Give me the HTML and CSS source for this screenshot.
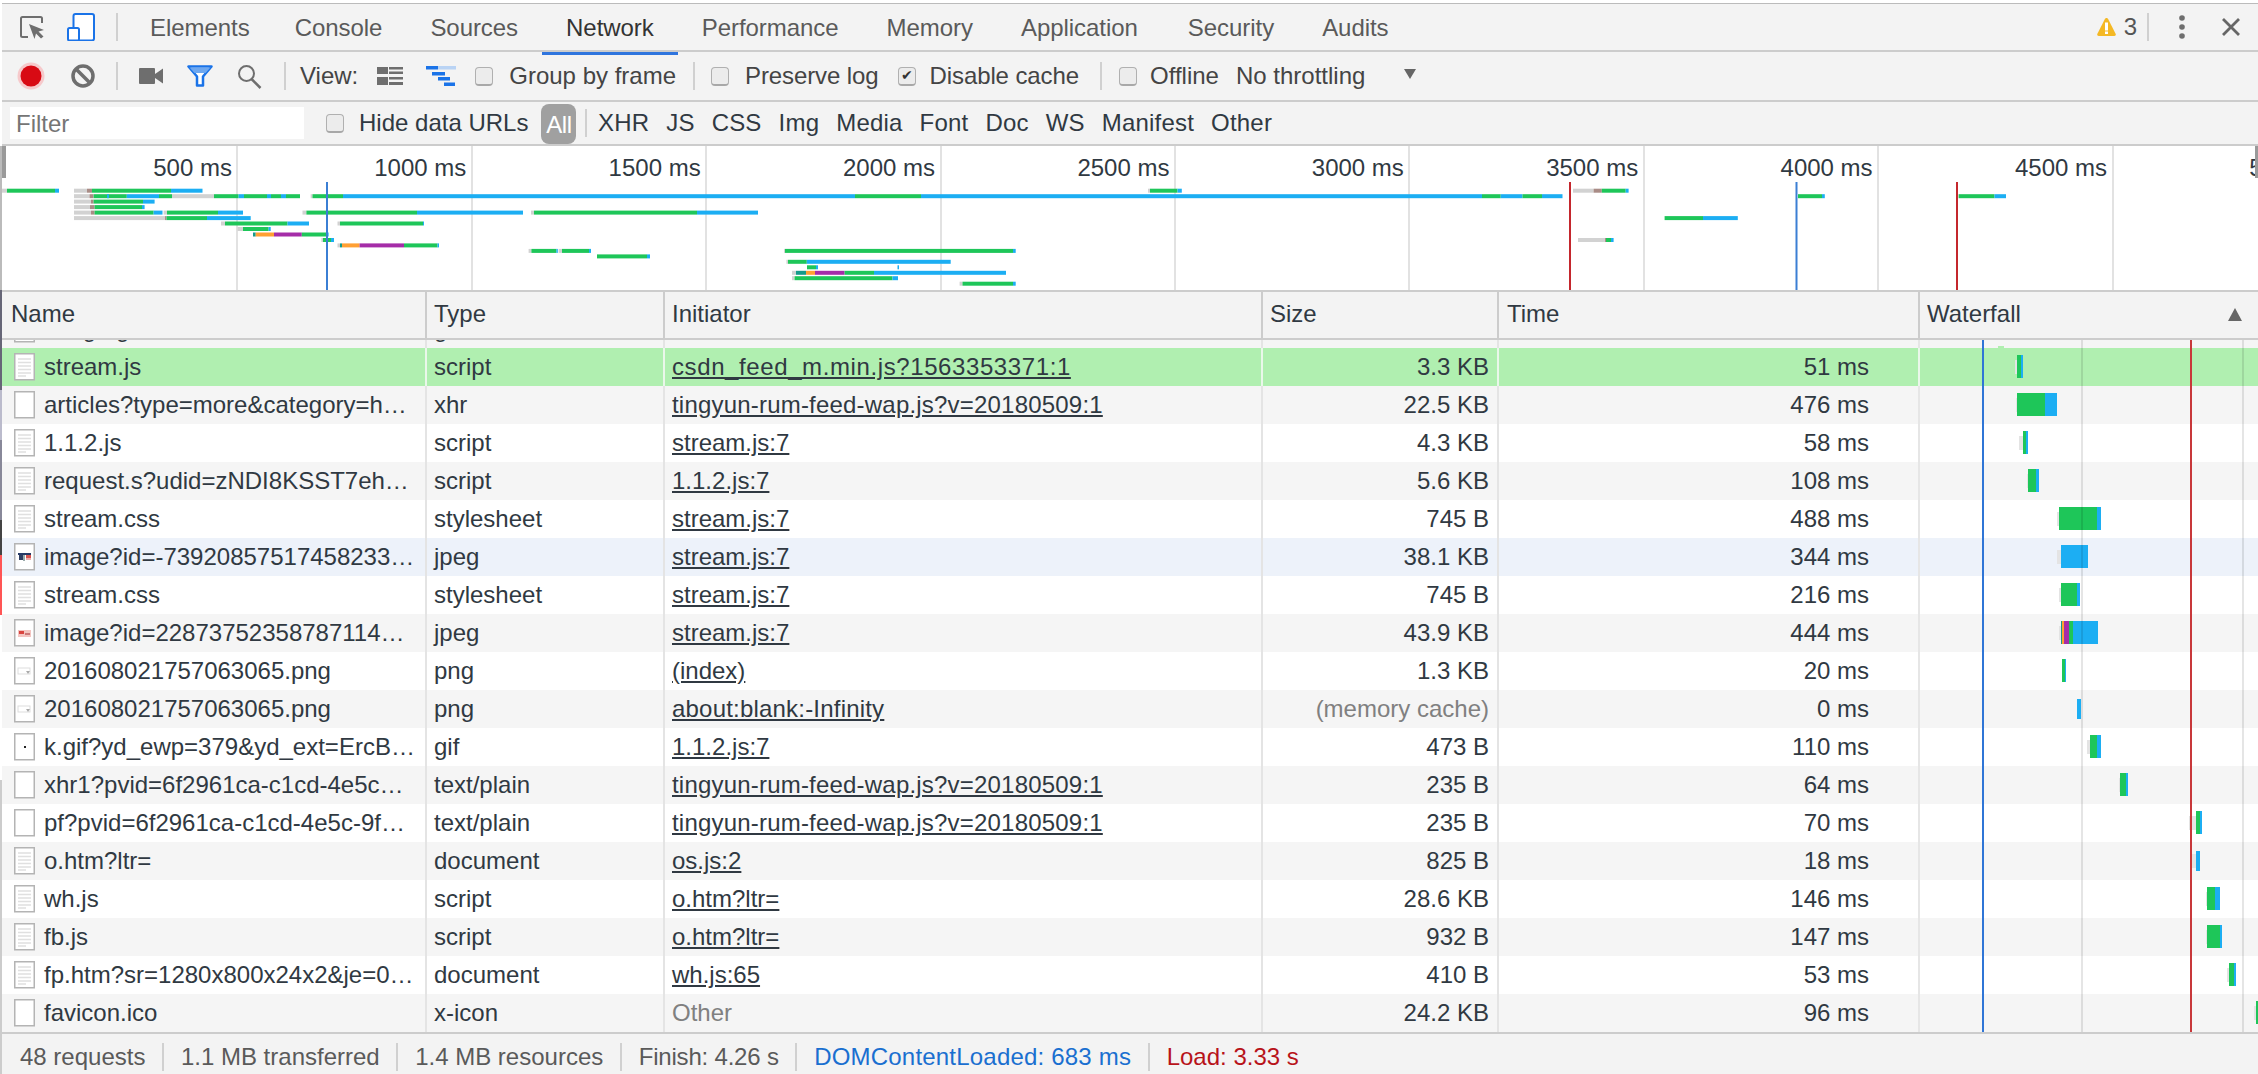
FILE: index.html
```html
<!DOCTYPE html>
<html lang="en">
<head>
<meta charset="utf-8">
<title>DevTools Network</title>
<link rel="stylesheet" href="styles.css">
</head>
<body>
<svg class="sprite" aria-hidden="true">
  <symbol id="f-blank" viewBox="0 0 21 28"><rect class="f-page" x=".75" y=".75" width="19.5" height="26"/></symbol>
  <symbol id="f-doc" viewBox="0 0 21 28"><rect class="f-page" x=".75" y=".75" width="19.5" height="26"/><path class="f-lines" d="M4 6h13M4 9.500h13M4 13h13M4 16.500h13M4 20h13M4 23h8"/></symbol>
  <symbol id="f-img1" viewBox="0 0 21 28"><rect class="f-page" x=".75" y=".75" width="19.500" height="26"/><rect x="4" y="10" width="13" height="2" fill="#273a66"/><rect x="5" y="12" width="4" height="5" fill="#2f3f63"/><rect x="9" y="12" width="2" height="6" fill="#9aa"/><rect x="12" y="12" width="5" height="3" fill="#d9544f"/><rect x="12" y="15" width="5" height="2" fill="#eaa"/></symbol>
  <symbol id="f-img2" viewBox="0 0 21 28"><rect class="f-page" x=".75" y=".75" width="19.500" height="26"/><rect x="4" y="11" width="13" height="7" fill="#f3c4c0"/><rect x="5" y="12" width="5" height="3" fill="#d9443f"/><rect x="11" y="14" width="5" height="2" fill="#c77"/></symbol>
  <symbol id="f-png" viewBox="0 0 21 28"><rect class="f-page" x=".75" y=".75" width="19.500" height="26"/><rect x="4" y="11" width="12" height="6" fill="none" stroke="#ddd"/><path d="M12 14h4l-2 3z" fill="#aaa"/></symbol>
  <symbol id="f-gif" viewBox="0 0 21 28"><rect class="f-page" x=".75" y=".75" width="19.500" height="26"/><rect x="10" y="13" width="2" height="2" fill="#222"/></symbol>
</svg>

<div class="app">
  <div class="peek"></div>
  <div class="devtools">

    <header class="tabbar">
      <svg class="ic ic-inspect" width="25" height="23" viewBox="0 0 25 23"><path class="st" d="M8 21H2.500a1.500 1.500 0 0 1-1.500-1.500V2.500A1.500 1.500 0 0 1 2.500 1h18A1.500 1.500 0 0 1 22 2.500V7"/><path class="fl" d="M9 8l15 6-5.500 1.500 5 5-2.500 2-5-5L14.500 23z"/></svg>
      <svg class="ic ic-device" width="28" height="28" viewBox="0 0 28 28"><rect x="6.500" y="1" width="20.500" height="26.500" rx="2" class="st-b"/><rect x="1" y="15" width="11" height="12.500" rx="1.500" class="st-b wh"/></svg>
      <span class="vsep sep-tabs"></span>
      <nav class="tabs">
        <a class="tab tab-first">Elements</a>
        <a class="tab">Console</a>
        <a class="tab">Sources</a>
        <a class="tab active">Network</a>
        <a class="tab">Performance</a>
        <a class="tab">Memory</a>
        <a class="tab tab-app">Application</a>
        <a class="tab">Security</a>
        <a class="tab">Audits</a>
      </nav>
      <div class="tab-right">
        <svg class="ic" width="19" height="18" viewBox="0 0 19 18"><path d="M9.500 0c.8 0 1.200.4 1.600 1.100l7.500 14.600c.6 1.200 0 2.300-1.300 2.300H1.700C.4 18-.2 16.900.4 15.700L7.900 1.100C8.300.4 8.700 0 9.500 0z" fill="#f4b824"/><rect x="8" y="4.500" width="3" height="8" fill="#fff"/><rect x="8" y="13.500" width="3" height="2.500" fill="#fff"/></svg>
        <span class="warn-count">3</span>
        <span class="vsep sep-warn"></span>
        <svg class="ic ic-dots" width="6" height="24" viewBox="0 0 6 24"><circle cx="3" cy="3" r="2.800"/><circle cx="3" cy="12" r="2.800"/><circle cx="3" cy="21" r="2.800"/></svg>
        <svg class="ic ic-close" width="18" height="18" viewBox="0 0 18 18"><path d="M1 1l16 16M17 1L1 17" stroke="#666" stroke-width="2.800" fill="none"/></svg>
      </div>
    </header>

    <div class="toolbar">
      <svg class="ic ic-record" width="30" height="30" viewBox="0 0 30 30"><circle cx="15" cy="15" r="13.500" fill="#f6c9cb"/><circle cx="15" cy="15" r="10.500" fill="#d80a14"/></svg>
      <svg class="ic ic-clear" width="24" height="24" viewBox="0 0 24 24"><circle cx="12" cy="12" r="10" fill="none" stroke="#6e6e6e" stroke-width="3.500"/><path d="M5 5l14 14" stroke="#6e6e6e" stroke-width="3.500"/></svg>
      <span class="vsep sep-a"></span>
      <svg class="ic ic-cam" width="24" height="16" viewBox="0 0 24 16"><rect width="16" height="16" rx="1" fill="#6e6e6e"/><path d="M16 6l8-5.500v15L16 10z" fill="#6e6e6e"/></svg>
      <svg class="ic ic-filter" width="26" height="22" viewBox="0 0 26 22"><path d="M1.500 1.500h23L16 11.500V20.500h-6V11.500z" fill="#fff" stroke="#1a73e8" stroke-width="2.500" stroke-linejoin="round"/><path d="M2.500 2.500h21L18.500 8h-11z" fill="#6ea8f0"/></svg>
      <svg class="ic ic-search" width="25" height="25" viewBox="0 0 25 25"><circle cx="9.500" cy="9.500" r="7.500" fill="none" stroke="#6e6e6e" stroke-width="2"/><path d="M14.500 15l9 9" stroke="#6e6e6e" stroke-width="2.500"/></svg>
      <span class="vsep sep-b"></span>
      <span class="lbl lbl-view">View:</span>
      <svg class="ic ic-list" width="26" height="18" viewBox="0 0 26 18"><path class="fl" d="M0 0h11v7H0zM0 10h11v8H0zM12 0h14v2.500H12zM12 4.500h14V7H12zM12 10h14v2.500H12zM12 15h14v3H12z"/></svg>
      <svg class="ic ic-wf" width="30" height="20" viewBox="0 0 30 20"><rect width="12" height="3.500" fill="#1a73e8"/><rect x="12" width="18" height="3.500" fill="#b9d3f4"/><rect x="6" y="6" width="13" height="3.500" fill="#1a73e8"/><rect x="12" y="11" width="12" height="3.500" fill="#1a73e8"/><rect x="18" y="16.500" width="11" height="3.500" fill="#1a73e8"/></svg>
      <span class="cb cb-group"></span>
      <span class="lbl lbl-group">Group by frame</span>
      <span class="vsep sep-c"></span>
      <span class="cb cb-preserve"></span>
      <span class="lbl lbl-check">Preserve log</span>
      <span class="cb checked cb-disable">&#10004;</span>
      <span class="lbl lbl-check lbl-disable">Disable cache</span>
      <span class="vsep sep-d"></span>
      <span class="cb cb-offline"></span>
      <span class="lbl lbl-offline">Offline</span>
      <span class="lbl lbl-throttle">No throttling</span>
      <span class="tri-down"></span>
    </div>

    <div class="filterbar">
      <div class="filter-input">Filter</div>
      <span class="cb cb-hide"></span>
      <span class="lbl lbl-hide">Hide data URLs</span>
      <span class="pill">All</span>
      <span class="vsep sep-f"></span>
      <span class="ftype first">XHR</span>
      <span class="ftype">JS</span>
      <span class="ftype">CSS</span>
      <span class="ftype">Img</span>
      <span class="ftype">Media</span>
      <span class="ftype">Font</span>
      <span class="ftype">Doc</span>
      <span class="ftype">WS</span>
      <span class="ftype">Manifest</span>
      <span class="ftype">Other</span>
    </div>

    <section class="overview">
      <div class="ticks">
        <div class="tick">500 ms</div><div class="tick">1000 ms</div><div class="tick">1500 ms</div><div class="tick">2000 ms</div><div class="tick">2500 ms</div><div class="tick">3000 ms</div><div class="tick">3500 ms</div><div class="tick">4000 ms</div><div class="tick">4500 ms</div><div class="tick">5000 ms</div>
      </div>
      <svg class="ov-chart" width="2256" height="144" viewBox="2 146 2256 144">
        <rect class="handle" x="2" y="146" width="4" height="32"/><rect class="handle" x="2255" y="146" width="3" height="32"/>
        <g transform="translate(0 188.700)"><rect class="s" x="2" width="5" height="4"/><rect class="g" x="7" width="48" height="4"/><rect class="b" x="55" width="4" height="4"/><rect class="s" x="74" width="13" height="4"/><rect class="r" x="87" width="5" height="4"/><rect class="g" x="92" width="79" height="4"/><rect class="b" x="171" width="31.500" height="4"/><rect class="s" x="1148" width="2" height="4"/><rect class="g" x="1150" width="27.500" height="4"/><rect class="b" x="1177.500" width="4.300" height="4"/><rect class="s" x="1573" width="20.600" height="4"/><rect class="r" x="1593.600" width="8.200" height="4"/><rect class="g" x="1601.800" width="23.900" height="4"/><rect class="b" x="1625.700" width="2.900" height="4"/></g>
        <g transform="translate(0 194.200)"><rect class="s" x="74" width="15.500" height="4"/><rect class="r" x="89.500" width="4" height="4"/><rect class="g" x="93.600" width="33.200" height="4"/><rect class="b" x="107" width="2" height="4"/><rect class="b" x="126.800" width="32.200" height="4"/><rect class="g" x="159" width="13" height="4"/><rect class="s" x="172" width="42" height="4"/><rect class="g" x="214" width="24.600" height="4"/><rect class="b" x="238.600" width="5.400" height="4"/><rect class="g" x="244" width="23" height="4"/><rect class="b" x="267" width="4" height="4"/><rect class="g" x="271" width="10" height="4"/><rect class="b" x="281" width="5" height="4"/><rect class="g" x="286" width="14" height="4"/><rect class="s" x="310.700" width="1.800" height="4"/><rect class="g" x="312.500" width="30.500" height="4"/><rect class="b" x="343" width="512" height="4"/><rect class="g" x="855" width="66" height="4"/><rect class="b" x="921" width="561" height="4"/><rect class="g" x="1482" width="18.700" height="4"/><rect class="b" x="1500.700" width="21.800" height="4"/><rect class="g" x="1522.500" width="19.500" height="4"/><rect class="b" x="1542" width="20.500" height="4"/><rect class="g" x="1798" width="24" height="4"/><rect class="b" x="1822" width="2.800" height="4"/><rect class="g" x="1958.600" width="35.900" height="4"/><rect class="b" x="1994.500" width="11.500" height="4"/></g>
        <g transform="translate(0 199.600)"><rect class="s" x="74" width="17" height="4"/><rect class="r" x="91" width="2.600" height="4"/><rect class="g" x="93.600" width="49.400" height="4"/><rect class="b" x="143" width="11.600" height="4"/></g>
        <g transform="translate(0 205.100)"><rect class="s" x="74" width="16" height="4"/><rect class="r" x="90" width="4.600" height="4"/><rect class="g" x="94.600" width="47.400" height="4"/><rect class="b" x="142" width="2.600" height="4"/></g>
        <g transform="translate(0 210.600)"><rect class="s" x="74" width="17" height="4"/><rect class="r" x="91" width="3.600" height="4"/><rect class="g" x="94.600" width="59" height="4"/><rect class="b" x="153.600" width="8.900" height="4"/><rect class="s" x="163.600" width="3.400" height="4"/><rect class="g" x="167" width="51" height="4"/><rect class="b" x="218" width="25" height="4"/><rect class="s" x="302.500" width="3.900" height="4"/><rect class="g" x="306.400" width="110.600" height="4"/><rect class="b" x="417" width="106" height="4"/><rect class="s" x="531" width="3" height="4"/><rect class="g" x="534" width="163" height="4"/><rect class="b" x="697" width="61" height="4"/></g>
        <g transform="translate(0 216.100)"><rect class="s" x="74" width="91" height="4"/><rect class="r" x="165" width="1.500" height="4"/><rect class="g" x="166.500" width="40.500" height="4"/><rect class="b" x="207" width="43.700" height="4"/><rect class="g" x="1664.600" width="38.400" height="4"/><rect class="b" x="1703" width="34.800" height="4"/></g>
        <g transform="translate(0 221.500)"><rect class="s" x="221" width="4" height="4"/><rect class="g" x="225" width="62.500" height="4"/><rect class="b" x="287.500" width="21.500" height="4"/><rect class="s" x="337.500" width="2.500" height="4"/><rect class="g" x="340" width="83" height="4"/><rect class="b" x="423" width="1" height="4"/></g>
        <g transform="translate(0 227)"><rect class="s" x="237.500" width="5.500" height="4"/><rect class="g" x="243" width="25.600" height="4"/><rect class="b" x="268.600" width="2.100" height="4"/></g>
        <g transform="translate(0 232.500)"><rect class="t" x="253" width="2.700" height="4"/><rect class="o" x="255.700" width="18.300" height="4"/><rect class="p" x="274" width="27.800" height="4"/><rect class="g" x="301.800" width="25" height="4"/><rect class="b" x="326.800" width="1.800" height="4"/></g>
        <g transform="translate(0 238)"><rect class="s" x="321.400" width="1.600" height="4"/><rect class="g" x="323" width="8" height="4"/><rect class="b" x="331" width="3" height="4"/><rect class="s" x="1578" width="27" height="4"/><rect class="r" x="1605" width="1" height="4"/><rect class="g" x="1606" width="5" height="4"/><rect class="b" x="1611" width="2.600" height="4"/></g>
        <g transform="translate(0 243.400)"><rect class="s" x="337.500" width="2.500" height="4"/><rect class="t" x="340" width="2" height="4"/><rect class="o" x="342" width="17.600" height="4"/><rect class="p" x="359.600" width="44.400" height="4"/><rect class="g" x="404" width="33.500" height="4"/><rect class="b" x="437.500" width="1.500" height="4"/></g>
        <g transform="translate(0 248.900)"><rect class="s" x="528.600" width="2.800" height="4"/><rect class="g" x="531.400" width="25" height="4"/><rect class="b" x="556.400" width="1.400" height="4"/><rect class="s" x="558.600" width="3.400" height="4"/><rect class="g" x="562" width="27" height="4"/><rect class="b" x="589" width="2" height="4"/><rect class="s" x="784" width="1" height="4"/><rect class="g" x="785" width="228" height="4"/><rect class="b" x="1013" width="2.700" height="4"/></g>
        <g transform="translate(0 254.400)"><rect class="g" x="597" width="50" height="4"/><rect class="b" x="647" width="3" height="4"/></g>
        <g transform="translate(0 259.800)"><rect class="s" x="786.400" width="1.600" height="4"/><rect class="g" x="788" width="18.800" height="4"/><rect class="b" x="806.800" width="143.900" height="4"/></g>
        <g transform="translate(0 265.300)"><rect class="g" x="807" width="9" height="4"/><rect class="b" x="816" width="2" height="4"/><rect class="b" x="897.500" width="1.500" height="4"/></g>
        <g transform="translate(0 270.800)"><rect class="s" x="792" width="4" height="4"/><rect class="t" x="796" width="10" height="4"/><rect class="o" x="806" width="9" height="4"/><rect class="p" x="815" width="29.600" height="4"/><rect class="g" x="844.600" width="29.400" height="4"/><rect class="b" x="874" width="132" height="4"/></g>
        <g transform="translate(0 276.200)"><rect class="s" x="792" width="2.600" height="4"/><rect class="g" x="794.600" width="97.900" height="4"/><rect class="b" x="892.500" width="5.500" height="4"/></g>
        <g transform="translate(0 281.700)"><rect class="s" x="959.600" width="2.900" height="4"/><rect class="g" x="962.500" width="50.500" height="4"/><rect class="b" x="1013" width="2.700" height="4"/></g>
        <rect class="line-blue" x="326" y="182" width="2" height="108"/><rect class="line-blue" x="1795.500" y="182" width="2" height="108"/>
        <rect class="line-red" x="1569" y="182" width="2" height="108"/><rect class="line-red" x="1956" y="182" width="2" height="108"/>
      </svg>
    </section>

    <section class="netlog">
      <div class="row head">
        <div class="cell c-name">Name</div>
        <div class="cell c-type">Type</div>
        <div class="cell c-init">Initiator</div>
        <div class="cell c-size">Size</div>
        <div class="cell c-time">Time</div>
        <div class="cell c-wf">Waterfall<span class="tri-up"></span></div>
      </div>
      <div class="body">
        <div class="rows">
          <div class="row scrolled alt"><div class="cell c-name"><svg class="file"><use href="#f-doc"/></svg>image.gif</div><div class="cell c-type">gif</div><div class="cell c-init"></div><div class="cell c-size"></div><div class="cell c-time"></div><div class="cell c-wf"><span class="mark"></span></div></div>

          <div class="row selected"><div class="cell c-name"><svg class="file"><use href="#f-doc"/></svg>stream.js</div><div class="cell c-type">script</div><div class="cell c-init"><a class="lnk-csdn">csdn_feed_m.min.js?1563353371:1</a></div><div class="cell c-size">3.3 KB</div><div class="cell c-time">51 ms</div><div class="cell c-wf"><i class="seg s" style="margin-left:95px;width:2.300px"></i><i class="seg g" style="width:3.400px"></i><i class="seg b" style="width:2.300px"></i></div></div>

          <div class="row alt"><div class="cell c-name"><svg class="file"><use href="#f-blank"/></svg>articles?type=more&amp;category=h…</div><div class="cell c-type">xhr</div><div class="cell c-init"><a class="lnk-mid">tingyun-rum-feed-wap.js?v=20180509:1</a></div><div class="cell c-size">22.5 KB</div><div class="cell c-time">476 ms</div><div class="cell c-wf"><i class="seg s" style="margin-left:95.700px;width:1.600px"></i><i class="seg g" style="width:27.400px"></i><i class="seg b" style="width:12.600px"></i></div></div>

          <div class="row"><div class="cell c-name"><svg class="file"><use href="#f-doc"/></svg>1.1.2.js</div><div class="cell c-type">script</div><div class="cell c-init"><a>stream.js:7</a></div><div class="cell c-size">4.3 KB</div><div class="cell c-time">58 ms</div><div class="cell c-wf"><i class="seg s" style="margin-left:99.300px;width:3.400px"></i><i class="seg g" style="width:3.300px"></i><i class="seg b" style="width:2.400px"></i></div></div>

          <div class="row alt"><div class="cell c-name"><svg class="file"><use href="#f-doc"/></svg>request.s?udid=zNDI8KSST7eh…</div><div class="cell c-type">script</div><div class="cell c-init"><a>1.1.2.js:7</a></div><div class="cell c-size">5.6 KB</div><div class="cell c-time">108 ms</div><div class="cell c-wf"><i class="seg s" style="margin-left:106.700px;width:1.600px"></i><i class="seg g" style="width:7.400px"></i><i class="seg b" style="width:3.600px"></i></div></div>

          <div class="row"><div class="cell c-name"><svg class="file"><use href="#f-doc"/></svg>stream.css</div><div class="cell c-type">stylesheet</div><div class="cell c-init"><a>stream.js:7</a></div><div class="cell c-size">745 B</div><div class="cell c-time">488 ms</div><div class="cell c-wf"><i class="seg s" style="margin-left:137.300px;width:1.400px"></i><i class="seg g" style="width:38.600px"></i><i class="seg b" style="width:3.400px"></i></div></div>

          <div class="row hover"><div class="cell c-name"><svg class="file"><use href="#f-img1"/></svg>image?id=-73920857517458233…</div><div class="cell c-type">jpeg</div><div class="cell c-init"><a>stream.js:7</a></div><div class="cell c-size">38.1 KB</div><div class="cell c-time">344 ms</div><div class="cell c-wf"><i class="seg s" style="margin-left:137.300px;width:3.400px"></i><i class="seg g" style="width:.400px"></i><i class="seg b" style="width:27px"></i></div></div>

          <div class="row"><div class="cell c-name"><svg class="file"><use href="#f-doc"/></svg>stream.css</div><div class="cell c-type">stylesheet</div><div class="cell c-init"><a>stream.js:7</a></div><div class="cell c-size">745 B</div><div class="cell c-time">216 ms</div><div class="cell c-wf"><i class="seg s" style="margin-left:139.300px;width:1.600px"></i><i class="seg g" style="width:16px"></i><i class="seg b" style="width:3.600px"></i></div></div>

          <div class="row alt"><div class="cell c-name"><svg class="file"><use href="#f-img2"/></svg>image?id=22873752358787114…</div><div class="cell c-type">jpeg</div><div class="cell c-init"><a>stream.js:7</a></div><div class="cell c-size">43.9 KB</div><div class="cell c-time">444 ms</div><div class="cell c-wf"><i class="seg s" style="margin-left:139.300px;width:1.600px"></i><i class="seg t" style="width:1.600px"></i><i class="seg o" style="width:1.600px"></i><i class="seg p" style="width:5.400px"></i><i class="seg g" style="width:3.600px"></i><i class="seg b" style="width:25.400px"></i></div></div>

          <div class="row"><div class="cell c-name"><svg class="file"><use href="#f-png"/></svg>201608021757063065.png</div><div class="cell c-type">png</div><div class="cell c-init"><a>(index)</a></div><div class="cell c-size">1.3 KB</div><div class="cell c-time">20 ms</div><div class="cell c-wf"><i class="seg g" style="margin-left:142.300px;width:2.700px"></i><i class="seg b" style="width:1.300px"></i></div></div>

          <div class="row alt"><div class="cell c-name"><svg class="file"><use href="#f-png"/></svg>201608021757063065.png</div><div class="cell c-type">png</div><div class="cell c-init"><a class="lnk-mid">about:blank:-Infinity</a></div><div class="cell c-size muted">(memory cache)</div><div class="cell c-time">0 ms</div><div class="cell c-wf"><i class="seg b" style="margin-left:157px;width:3.700px;height:20px"></i></div></div>

          <div class="row"><div class="cell c-name"><svg class="file"><use href="#f-gif"/></svg>k.gif?yd_ewp=379&amp;yd_ext=ErcB…</div><div class="cell c-type">gif</div><div class="cell c-init"><a>1.1.2.js:7</a></div><div class="cell c-size">473 B</div><div class="cell c-time">110 ms</div><div class="cell c-wf"><i class="seg s" style="margin-left:166.700px;width:3px"></i><i class="seg g" style="width:7.300px"></i><i class="seg b" style="width:3.700px"></i></div></div>

          <div class="row alt"><div class="cell c-name"><svg class="file"><use href="#f-blank"/></svg>xhr1?pvid=6f2961ca-c1cd-4e5c…</div><div class="cell c-type">text/plain</div><div class="cell c-init"><a class="lnk-mid">tingyun-rum-feed-wap.js?v=20180509:1</a></div><div class="cell c-size">235 B</div><div class="cell c-time">64 ms</div><div class="cell c-wf"><i class="seg s" style="margin-left:199px;width:1.400px"></i><i class="seg g" style="width:5.300px"></i><i class="seg b" style="width:2px"></i></div></div>

          <div class="row"><div class="cell c-name"><svg class="file"><use href="#f-blank"/></svg>pf?pvid=6f2961ca-c1cd-4e5c-9f…</div><div class="cell c-type">text/plain</div><div class="cell c-init"><a class="lnk-mid">tingyun-rum-feed-wap.js?v=20180509:1</a></div><div class="cell c-size">235 B</div><div class="cell c-time">70 ms</div><div class="cell c-wf"><i class="seg s" style="margin-left:269.300px;width:7px"></i><i class="seg g" style="width:3.700px"></i><i class="seg b" style="width:2px"></i></div></div>

          <div class="row alt"><div class="cell c-name"><svg class="file"><use href="#f-doc"/></svg>o.htm?ltr=</div><div class="cell c-type">document</div><div class="cell c-init"><a>os.js:2</a></div><div class="cell c-size">825 B</div><div class="cell c-time">18 ms</div><div class="cell c-wf"><i class="seg s" style="margin-left:272px;width:4.300px"></i><i class="seg b" style="width:3.700px;height:20px"></i></div></div>

          <div class="row"><div class="cell c-name"><svg class="file"><use href="#f-doc"/></svg>wh.js</div><div class="cell c-type">script</div><div class="cell c-init"><a>o.htm?ltr=</a></div><div class="cell c-size">28.6 KB</div><div class="cell c-time">146 ms</div><div class="cell c-wf"><i class="seg s" style="margin-left:285.700px;width:1.300px"></i><i class="seg g" style="width:7.700px"></i><i class="seg b" style="width:5.300px"></i></div></div>

          <div class="row alt"><div class="cell c-name"><svg class="file"><use href="#f-doc"/></svg>fb.js</div><div class="cell c-type">script</div><div class="cell c-init"><a>o.htm?ltr=</a></div><div class="cell c-size">932 B</div><div class="cell c-time">147 ms</div><div class="cell c-wf"><i class="seg s" style="margin-left:285.700px;width:1.300px"></i><i class="seg g" style="width:13px"></i><i class="seg b" style="width:1.700px"></i></div></div>

          <div class="row"><div class="cell c-name"><svg class="file"><use href="#f-doc"/></svg>fp.htm?sr=1280x800x24x2&amp;je=0…</div><div class="cell c-type">document</div><div class="cell c-init"><a>wh.js:65</a></div><div class="cell c-size">410 B</div><div class="cell c-time">53 ms</div><div class="cell c-wf"><i class="seg s" style="margin-left:307.300px;width:1.400px"></i><i class="seg g" style="width:5.300px"></i><i class="seg b" style="width:2px"></i></div></div>

          <div class="row alt"><div class="cell c-name"><svg class="file"><use href="#f-blank"/></svg>favicon.ico</div><div class="cell c-type">x-icon</div><div class="cell c-init muted">Other</div><div class="cell c-size">24.2 KB</div><div class="cell c-time">96 ms</div><div class="cell c-wf"><i class="seg s" style="margin-left:334.300px;width:1.700px"></i><i class="seg g" style="width:2px"></i></div></div>
        </div>
        <span class="wf-line l-dom"></span>
        <span class="wf-line l-grid1"></span>
        <span class="wf-line l-load"></span>
        <span class="wf-line l-grid2"></span>
      </div>
    </section>

    <footer class="status">
      <span class="stat">48 requests</span>
      <span class="stat">1.1 MB transferred</span>
      <span class="stat">1.4 MB resources</span>
      <span class="stat finish">Finish: 4.26 s</span>
      <span class="stat dom">DOMContentLoaded: 683 ms</span>
      <span class="stat load">Load: 3.33 s</span>
    </footer>
  </div>
</div>
</body>
</html>
```

FILE: styles.css
```css
* { box-sizing: border-box; }
html, body { margin: 0; height: 100%; overflow: hidden; }
body { background: #fff; font: 24px/1 "Liberation Sans", Arial, sans-serif; color: #303942; }
.sprite { position: absolute; width: 0; height: 0; }
.app { display: flex; height: 1074px; }
.peek {
  flex: 0 0 2px;
  background: linear-gradient(#fff 0, #fff 146px, #bbb 146px, #bbb 290px, #667 290px, #667 390px, #bbc 390px, #bbc 440px, #889 440px, #889 520px, #444 520px, #444 555px, #f55 555px, #f55 615px, #fff 615px, #fff 780px, #ccc 780px, #ccc 1074px);
}
.devtools { flex: 1; min-width: 0; display: flex; flex-direction: column; padding-top: 3px; }

.ic { flex: none; display: block; }
.st { fill: none; stroke: #6e6e6e; stroke-width: 2; }
.fl { fill: #6e6e6e; }
.st-b { fill: #fff; stroke: #1a73e8; stroke-width: 2; }
.wh { fill: #fff; }
.vsep { flex: none; width: 2px; height: 28px; background: #d0d0d0; }
.lbl { flex: none; white-space: nowrap; color: #444; }

/* Tab strip */
.tabbar { height: 49px; flex: none; display: flex; align-items: center; background: #f3f3f3; border-top: 1px solid #bbb; border-bottom: 2px solid #ccc; }
.ic-inspect { margin-left: 18px; }
.ic-device { margin-left: 22px; }
.sep-tabs { margin-left: 21px; }
.tabs { display: flex; height: 100%; margin-left: 8px; }
.tab { padding: 0 24px; display: flex; align-items: center; color: #5a5a5a; height: 48px; position: relative; letter-spacing: -.05px; }
.tab-first { padding-right: 21px; }
.tab-app { padding-right: 26px; }
.tab.active { color: #333; }
.tab.active::after { content: ""; position: absolute; left: 0; right: 0; bottom: -3px; height: 3px; background: #2f75de; }
.tab-right { margin-left: auto; display: flex; align-items: center; }
.warn-count { margin-left: 7.5px; color: #555; }
.sep-warn { margin-left: 9.5px; }
.ic-dots { margin-left: 30.5px; }
.ic-dots circle { fill: #6e6e6e; }
.ic-close { margin-left: 37px; margin-right: 18px; }

/* Record toolbar */
.toolbar { height: 50px; flex: none; display: flex; align-items: center; background: #f3f3f3; border-bottom: 2px solid #ccc; }
.ic-record { margin-left: 14px; }
.ic-clear { margin-left: 25px; }
.sep-a { margin-left: 21px; }
.ic-cam { margin-left: 21px; }
.ic-filter { margin-left: 24px; }
.ic-search { margin-left: 24px; }
.sep-b { margin-left: 22px; }
.lbl-view { margin-left: 14px; }
.ic-list { margin-left: 19px; }
.ic-wf { margin-left: 23px; }
.cb { flex: none; display: inline-block; width: 18px; height: 19px; border: 1px solid #b0b0b0; border-bottom: 2px solid #a8a8a8; border-radius: 4px; background: #ececec; }
.cb.checked { font-size: 14px; line-height: 15px; text-align: center; color: #333; overflow: hidden; }
.cb-group { margin-left: 19px; }
.lbl-group { margin-left: 16px; }
.sep-c { margin-left: 17px; }
.cb-preserve { margin-left: 16px; }
.lbl-check { margin-left: 16px; letter-spacing: -.1px; }
.lbl-disable { margin-left: 14px; }
.cb-disable { margin-left: 19px; }
.sep-d { margin-left: 21px; }
.cb-offline { margin-left: 17px; }
.lbl-offline { margin-left: 13px; }
.lbl-throttle { margin-left: 17px; }
.tri-down { flex: none; margin-left: 39px; margin-top: -4px; width: 0; height: 0; border-left: 6px solid transparent; border-right: 6px solid transparent; border-top: 10px solid #666; }

/* Filter row */
.filterbar { height: 44px; flex: none; display: flex; align-items: center; background: #f3f3f3; border-bottom: 2px solid #ccc; }
.filter-input { flex: none; margin-left: 8px; width: 294px; height: 32px; background: #fff; color: #757575; padding-left: 6px; line-height: 34px; }
.cb-hide { margin-left: 22px; }
.lbl-hide { margin-left: 15px; color: #303942; }
.pill { flex: none; margin-left: 13px; width: 35px; height: 40px; border-radius: 8px; background: #a0a0a0; color: #fff; text-align: center; line-height: 41px; letter-spacing: -.5px; margin-top: 1px; }
.sep-f { margin-left: 9px; }
.ftype { flex: none; margin-left: 17px; letter-spacing: .2px; }
.ftype.first { margin-left: 10.5px; }

/* Overview */
.overview { height: 144px; flex: none; position: relative; overflow: hidden; background: #fff; border-bottom: 0; }
.ticks { display: flex; padding-left: 2px; height: 100%; }
.tick { flex: 0 0 234.4px; border-right: 2px solid #e2e2e2; text-align: right; padding: 10px 4.5px 0 0; white-space: nowrap; }
.ov-chart { position: absolute; left: 0; top: 0; }
.handle { fill: #9a9a9a; }
.s { fill: #d2d2d2; background: #e6e6e6; }
.r { fill: #a98c86; background: #a98c86; }
.g { fill: #1ec659; background: #1ec659; }
.b { fill: #1caef3; background: #1caef3; }
.t { fill: #159a8a; background: #159a8a; }
.o { fill: #ffa033; background: #ffa033; }
.p { fill: #a52da8; background: #a52da8; }
.line-blue { fill: #3b7fd4; }
.line-red { fill: #c4272d; }

/* Request table */
.netlog { flex: 1; min-height: 0; display: flex; flex-direction: column; border-top: 2px solid #ccc; }
.row { display: grid; grid-template-columns: 423px 238px 598px 236px 421px 340px; height: 38px; line-height: 38px; flex: none; }
.cell { white-space: nowrap; overflow: hidden; border-left: 2px solid #e4e4e4; padding: 0 8px 0 7px; min-width: 0; }
.row .c-name { border-left: 0; padding-left: 11.5px; display: flex; align-items: center; }
.c-size, .row .c-time { text-align: right; }
.row .c-time { padding-right: 49px; }
.row .c-wf { border-left: 2px solid #e6e6e6; padding: 0; display: flex; align-items: center; }
.c-init a { text-decoration: underline; color: #303942; }
.c-init .lnk-csdn { letter-spacing: .6px; }
.c-init .lnk-mid { letter-spacing: .2px; }
.muted { color: #808080; }
.file { flex: none; width: 21px; height: 28px; margin-right: 9.500px; margin-bottom: 0; }
.f-page { fill: #fff; stroke: #b4b4b4; stroke-width: 1.5; }
.f-lines { fill: none; stroke: #e0e0e0; stroke-width: 1.5; }

.row.head { height: 48px; line-height: 43px; background: #f3f3f3; border-bottom: 2px solid #ccc; }
.row.head .cell { border-left-color: #ccc; }
.row.head .c-name { padding-left: 9px; display: block; }
.row.head .c-size, .row.head .c-time { text-align: left; }
.row.head .c-time { padding-left: 8px; }
.row.head .c-wf { border-left: 2px solid #ccc; padding-left: 7px; position: relative; display: block; }
.tri-up { position: absolute; right: 16px; top: 16px; width: 0; height: 0; border-left: 7px solid transparent; border-right: 7px solid transparent; border-bottom: 13px solid #666; }

.body { flex: 1; min-height: 0; position: relative; overflow: hidden; background: #fff; }
.rows { display: flex; flex-direction: column; }
.row.scrolled { margin-top: -30px; }
.row.alt { background: #f5f5f5; }
.row.hover { background: #edf2fa; }
.row.selected { background: #b0efb0; }
.row.selected .cell { border-left-color: #eaf7ea; }
.seg { flex: none; display: block; height: 23px; margin-top: -1px; }
.seg.s { height: 14px; background: #e4e4e4; }
.mark { flex: none; width: 6px; height: 2px; margin: 36px 0 0 78px; background: #b0efb0; }

.wf-line { position: absolute; top: 0; bottom: 0; }
.l-dom { left: 1980px; width: 2px; background: #2f75d6; }
.l-grid1 { left: 2079px; width: 2px; background: rgba(0,0,0,.1); }
.l-load { left: 2188px; width: 2px; background: #c8383a; }
.l-grid2 { left: 2240px; width: 2px; background: rgba(0,0,0,.1); }

/* Status bar */
.status { height: 42px; flex: none; display: flex; align-items: center; background: #f3f3f3; border-top: 2px solid #ccc; color: #5a5a5a; padding-top: 6px; }
.stat { flex: none; padding: 0 16.5px 0 17px; height: 28px; line-height: 28px; border-left: 2px solid #d0d0d0; white-space: nowrap; }
.stat:first-child { border-left: 0; padding-left: 18px; }
.stat.finish { letter-spacing: -.2px; }
.stat.dom { color: #1a6fd0; letter-spacing: .2px; }
.stat.load { color: #b8131a; }
```
